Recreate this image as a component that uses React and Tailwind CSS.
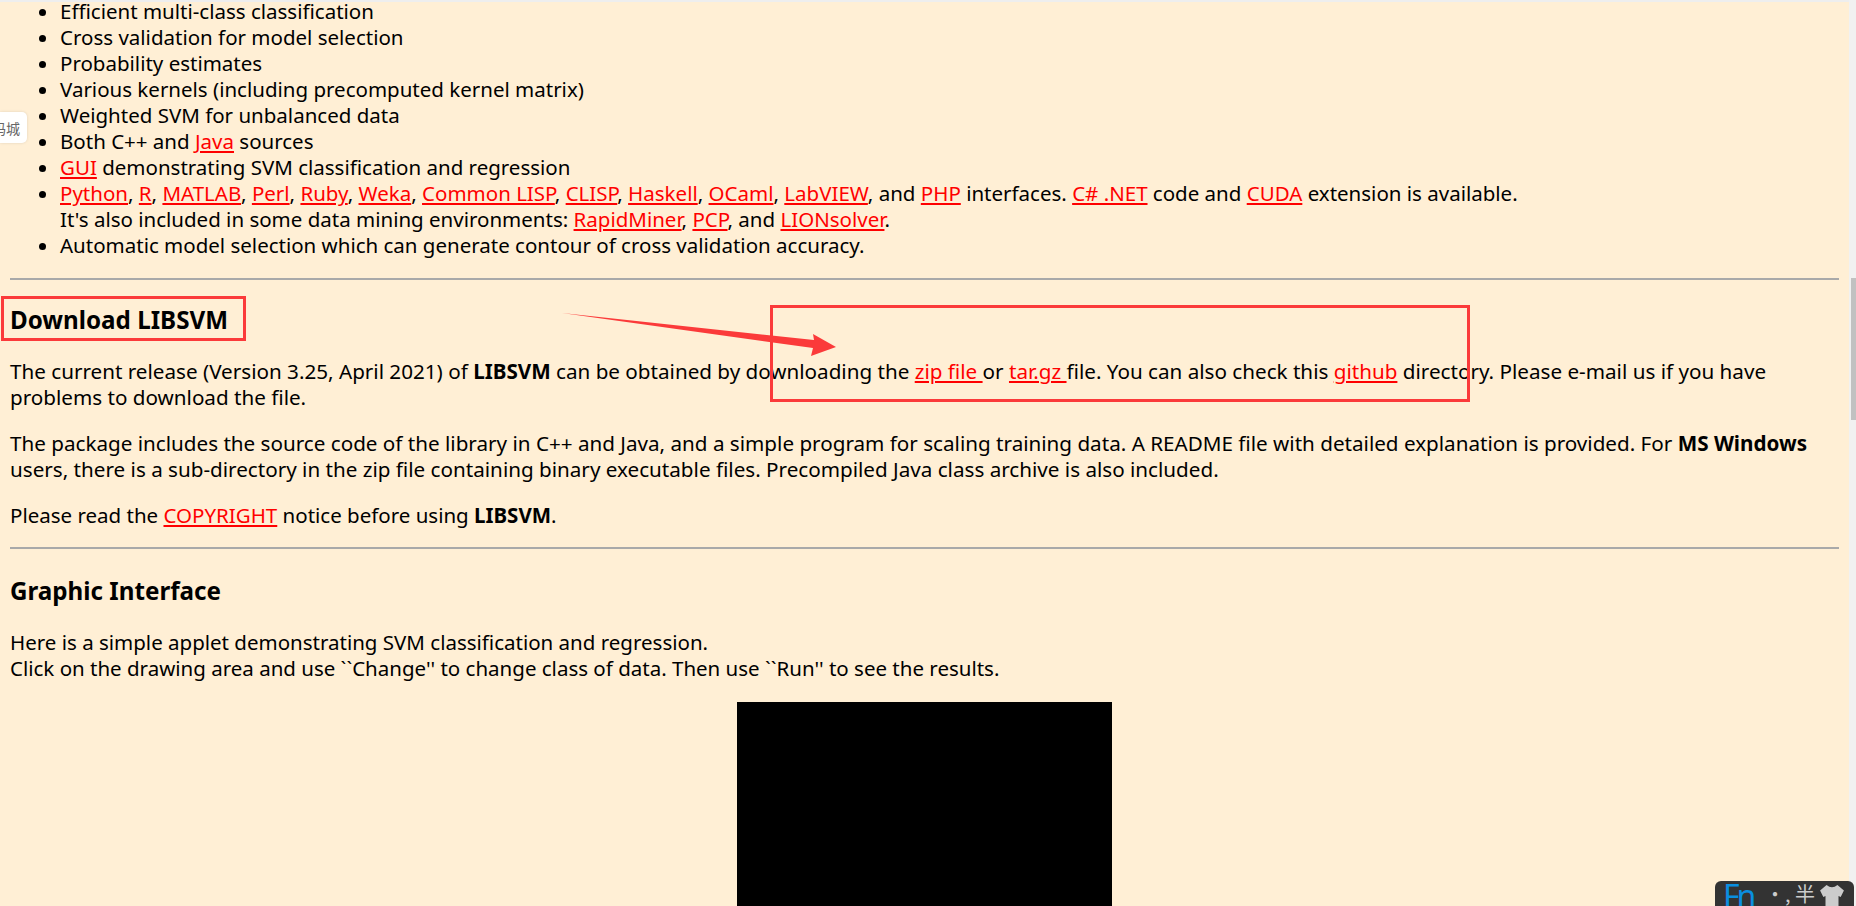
const A = ({ children }) => (
  <a href="#" className="text-[#ff0000] underline">{children}</a>
);

const Bullet = ({ children }) => <li>{children}</li>;

function Features() {
  return (
    <ul className="list-disc pl-[50px] -mt-[4px]">
      <Bullet>Efficient multi-class classification</Bullet>
      <Bullet>Cross validation for model selection</Bullet>
      <Bullet>Probability estimates</Bullet>
      <Bullet>Various kernels (including precomputed kernel matrix)</Bullet>
      <Bullet>Weighted SVM for unbalanced data</Bullet>
      <Bullet>Both C++ and <A>Java</A> sources</Bullet>
      <Bullet><A>GUI</A> demonstrating SVM classification and regression</Bullet>
      <Bullet>
        <A>Python</A>, <A>R</A>, <A>MATLAB</A>, <A>Perl</A>, <A>Ruby</A>, <A>Weka</A>, <A>Common LISP</A>, <A>CLISP</A>, <A>Haskell</A>, <A>OCaml</A>, <A>LabVIEW</A>, and <A>PHP</A> interfaces. <A>C# .NET</A> code and <A>CUDA</A> extension is available.
        <br />
        It's also included in some data mining environments: <A>RapidMiner</A>, <A>PCP</A>, and <A>LIONsolver</A>.
      </Bullet>
      <Bullet>Automatic model selection which can generate contour of cross validation accuracy.</Bullet>
    </ul>
  );
}

function Annotations() {
  return (
    <>
      <div className="absolute left-[1px] top-[296px] w-[245px] h-[45px] border-[3px] border-[#fb3a3a]" />
      <div className="absolute left-[770px] top-[305px] w-[700px] h-[97px] border-[3px] border-[#fb3a3a]" />
      <svg className="absolute left-0 top-0" width="1856" height="906">
        <polygon points="562,313 814,340 813,334 836,347 811,356 813,348" fill="#fb3a3a" />
      </svg>
    </>
  );
}

export default function App() {
  return (
    <div className="relative flex h-[906px] overflow-hidden bg-[#ffefd5] text-black text-[20.5px] leading-[26px] font-['Noto_Sans',sans-serif]">
      <main className="flex-1 min-w-0 px-[10px] border-t-2 border-[#eeeeee]">
        <Features />
        <hr className="mt-[20px] border-t-2 border-[#a9a9a9]" />
        <h3 className="mt-[24px] text-[24.2px] leading-[32px] font-bold">Download LIBSVM</h3>
        <p className="mt-[22px] text-[20.65px]">
          The current release (Version 3.25, April 2021) of <b>LIBSVM</b> can be obtained by downloading the <A>zip file </A>or <A>tar.gz </A>file. You can also check this <A>github</A> directory. Please e-mail us if you have problems to download the file.
        </p>
        <p className="mt-[20px] text-[20.65px]">
          The package includes the source code of the library in C++ and Java, and a simple program for scaling training data. A README file with detailed explanation is provided. For <b>MS Windows</b> users, there is a sub-directory in the zip file containing binary executable files. Precompiled Java class archive is also included.
        </p>
        <p className="mt-[20px]">
          Please read the <A>COPYRIGHT</A> notice before using <b>LIBSVM</b>.
        </p>
        <hr className="mt-[19px] border-t-2 border-[#a9a9a9]" />
        <h3 className="mt-[26px] text-[24.2px] leading-[32px] font-bold">Graphic Interface</h3>
        <p className="mt-[22px]">
          Here is a simple applet demonstrating SVM classification and regression.
          <br />
          Click on the drawing area and use ``Change'' to change class of data. Then use ``Run'' to see the results.
        </p>
        <div className="mt-[21px] mx-auto w-[375px] h-[400px] bg-black" />
      </main>

      <div className="w-[7px] shrink-0 bg-[#f1f1f1] pl-[2px] pt-[278px]">
        <div className="h-[142px] bg-[#c1c1c1]" />
      </div>

      <Annotations />

      <div className="absolute left-0 top-[112px] w-[27px] h-[31px] flex items-center justify-end overflow-hidden whitespace-nowrap bg-white rounded-r-[5px] shadow-[0_0_3px_rgba(0,0,0,0.12)] pr-[7px] text-[14px] text-[#666] font-['Noto_Sans_CJK_SC',sans-serif]">
        码城
      </div>

      <div className="absolute left-[1715px] top-[881px] w-[139px] h-[30px] flex items-start overflow-hidden bg-[#333333] rounded-[6px] pl-[8px] text-[32px] leading-[30px]">
        <span className="w-[30px] shrink-0 tracking-[-3px] text-[#0a8fe0]">Fn</span>
        <span className="ml-[12px] w-[54px] shrink-0 whitespace-nowrap text-[#cccccc] text-[20px] leading-[26px] font-['Noto_Sans_CJK_SC',sans-serif]">·, 半</span>
        <svg width="26" height="26" viewBox="0 0 24 24" className="mt-[3px] shrink-0">
          <path d="M7 1 L1 6 L4 12 L6 11 L6 24 L18 24 L18 11 L20 12 L23 6 L17 1 Q12 5 7 1 Z" fill="#cccccc" />
        </svg>
      </div>
    </div>
  );
}
